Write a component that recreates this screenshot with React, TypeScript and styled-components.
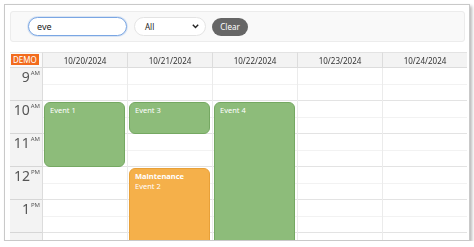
import React from 'react';
import styled, { createGlobalStyle } from 'styled-components';

const GlobalStyle = createGlobalStyle`
	html, body {
		margin: 0;
		padding: 0;
		background: #fff;
	}
	body {
		font-family: 'Segoe UI', 'Noto Sans', 'Open Sans', sans-serif;
	}
`;

const HOUR = 33;
const START = 9;

const Frame = styled.div`
	box-sizing: border-box;
	margin: 4px 0 0 4px;
	width: 466px;
	height: 237px;
	border: 1px solid #c9c9c9;
	box-shadow: 2px 2px 3px rgba(0, 0, 0, 0.28);
	padding: 6px 2px 0 5px;
	overflow: hidden;
	display: flex;
	flex-direction: column;
	gap: 10px;
`;

const Toolbar = styled.div`
	box-sizing: border-box;
	height: 31px;
	margin-right: 2px;
	display: flex;
	align-items: center;
	gap: 6px;
	padding-left: 17px;
	background: #f9f9f9;
	border: 1px solid #ececec;
	border-radius: 3px;
`;

const SearchInput = styled.input`
	box-sizing: border-box;
	width: 99px;
	height: 19px;
	margin-right: 1px;
	padding: 0 8px;
	border: 1px solid #7aa6e3;
	border-radius: 10px;
	background: #fff;
	font-family: inherit;
	font-size: 9px;
	color: #222;
	outline: none;
	box-shadow: 0 0 0 1px rgba(122, 166, 227, 0.25);
`;

const SelectWrap = styled.div`
	box-sizing: border-box;
	position: relative;
	width: 72px;
	height: 19px;
	border: 1px solid #e3e3e3;
	border-radius: 10px;
	background: #fff;
	display: flex;
	align-items: center;
	padding-left: 10px;
	font-size: 8px;
	color: #222;
`;

const Chevron = styled.svg`
	position: absolute;
	right: 6px;
	top: 6px;
`;

const ClearButton = styled.button`
	box-sizing: border-box;
	width: 36px;
	height: 18px;
	border: none;
	border-radius: 9px;
	background: #666;
	color: #fff;
	font-family: inherit;
	font-size: 8px;
	padding: 0;
`;

const Calendar = styled.div`
	display: grid;
	grid-template-columns: 33px repeat(5, 85px);
	grid-template-rows: 16px auto;
	flex: 1;
	overflow: hidden;
`;

const Corner = styled.div`
	border-right: 1px solid #dcdcdc;
	border-bottom: 1px solid #dcdcdc;
	border-top: 1px solid #e6e6e6;
	background: #fafafa;
	position: relative;
`;

const DemoBadge = styled.div`
	position: absolute;
	left: 1px;
	top: 1px;
	background: #f26b1d;
	color: #fff;
	font-size: 8px;
	line-height: 11px;
	padding: 0 2px;
`;

const DayHeader = styled.div`
	box-sizing: border-box;
	background: #f3f3f3;
	border-top: 1px solid #e3e3e3;
	border-right: 1px solid #dcdcdc;
	border-bottom: 1px solid #dcdcdc;
	font-size: 8px;
	color: #333;
	display: flex;
	align-items: center;
	justify-content: center;
`;

const RowHeaders = styled.div`
	background: #f3f3f3;
	border-right: 1px solid #dcdcdc;
`;

const HourLabel = styled.div`
	box-sizing: border-box;
	height: ${HOUR}px;
	border-bottom: 1px solid #d6d6d6;
	display: flex;
	justify-content: flex-end;
	padding: 1px 2px 0 0;
	color: #555;
	font-size: 14px;
	line-height: 16px;
`;

const Meridiem = styled.span`
	font-size: 6px;
	line-height: 8px;
	margin-left: 1px;
`;

const DayColumn = styled.div`
	position: relative;
	border-right: 1px solid #ebebeb;
`;

const Slot = styled.div<{ $half?: boolean }>`
	box-sizing: border-box;
	height: ${HOUR / 2}px;
	border-bottom: 1px solid ${(p) => (p.$half ? '#f2f2f2' : '#e3e3e3')};
`;

const Event = styled.div<{ $kind: 'green' | 'orange' }>`
	box-sizing: border-box;
	position: absolute;
	left: 1px;
	right: 2px;
	border-radius: 6px;
	padding: 2px 5px;
	font-size: 7.5px;
	line-height: 10px;
	color: #fff;
	background: ${(p) => (p.$kind === 'green' ? '#8dbc7a' : '#f5b04a')};
	border: 1px solid ${(p) => (p.$kind === 'green' ? '#75a862' : '#e8a038')};
`;

const EventTitle = styled.div`
	font-weight: 700;
`;

const days = ['10/20/2024', '10/21/2024', '10/22/2024', '10/23/2024', '10/24/2024'];
const hours = [
	{ h: '9', m: 'AM' },
	{ h: '10', m: 'AM' },
	{ h: '11', m: 'AM' },
	{ h: '12', m: 'PM' },
	{ h: '1', m: 'PM' },
	{ h: '', m: '' },
];

type Ev = { day: number; start: number; end: number; text: string; title?: string; kind: 'green' | 'orange' };

const events: Ev[] = [
	{ day: 0, start: 10, end: 12, text: 'Event 1', kind: 'green' },
	{ day: 1, start: 10, end: 11, text: 'Event 3', kind: 'green' },
	{ day: 1, start: 12, end: 15, text: 'Event 2', title: 'Maintenance', kind: 'orange' },
	{ day: 2, start: 10, end: 15, text: 'Event 4', kind: 'green' },
];

const App = () => {
	return (
		<>
			<GlobalStyle />
			<Frame>
				<Toolbar>
					<SearchInput defaultValue="eve" autoFocus />
					<SelectWrap>
						All
						<Chevron width="7" height="5" viewBox="0 0 7 5">
							<path d="M0.8 0.8 L3.5 3.6 L6.2 0.8" fill="none" stroke="#222" strokeWidth="1.4" />
						</Chevron>
					</SelectWrap>
					<ClearButton>Clear</ClearButton>
				</Toolbar>
				<Calendar>
					<Corner>
						<DemoBadge>DEMO</DemoBadge>
					</Corner>
					{days.map((d) => (
						<DayHeader key={d}>{d}</DayHeader>
					))}
					<RowHeaders>
						{hours.map((h, i) => (
							<HourLabel key={i}>
								{h.h}
								{h.m && <Meridiem>{h.m}</Meridiem>}
							</HourLabel>
						))}
					</RowHeaders>
					{days.map((d, i) => (
						<DayColumn key={d}>
							{hours.map((h, j) => (
								<React.Fragment key={j}>
									<Slot $half />
									<Slot />
								</React.Fragment>
							))}
							{events
								.filter((e) => e.day === i)
								.map((e) => (
									<Event
										key={e.text}
										$kind={e.kind}
										style={{ top: (e.start - START) * HOUR + 1, height: (e.end - e.start) * HOUR - 1 }}
									>
										{e.title && <EventTitle>{e.title}</EventTitle>}
										{e.text}
									</Event>
								))}
						</DayColumn>
					))}
				</Calendar>
			</Frame>
		</>
	);
};

export default App;
